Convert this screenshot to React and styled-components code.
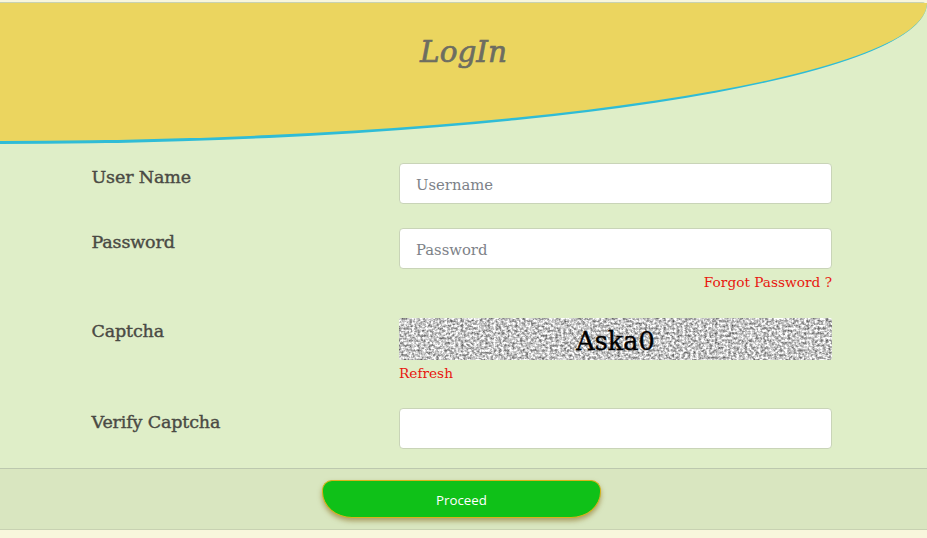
import React from "react";
import styled, { createGlobalStyle } from "styled-components";

const GlobalStyle = createGlobalStyle`
html, body {
    margin : 0;
    padding : 0;
    background-color : #f8f6dc;
}
* {
    box-sizing : border-box;
}
`

export default function App(){
    return(
        <>
        <GlobalStyle/>
        <Page>
            <Card>
                <Header>
                    <Title>LogIn</Title>
                </Header>
                <Form>
                    <Row>
                        <Label>User Name</Label>
                        <Field>
                            <Input type="text" placeholder="Username"/>
                        </Field>
                    </Row>
                    <Row $gap={24}>
                        <Label>Password</Label>
                        <Field>
                            <Input type="password" placeholder="Password"/>
                            <LinkRow $right>Forgot Password ?</LinkRow>
                        </Field>
                    </Row>
                    <Row $gap={25}>
                        <Label>Captcha</Label>
                        <Field>
                            <CaptchaBox>
                                <Noise aria-hidden="true">
                                    <filter id="grain" x="0" y="0" width="100%" height="100%" colorInterpolationFilters="sRGB">
                                        <feTurbulence type="fractalNoise" baseFrequency="0.37 0.41" numOctaves="4" seed="23"/>
                                        <feColorMatrix type="matrix" values="1.15 0 0 0 0.2  1.15 0 0 0 0.2  1.15 0 0 0 0.2  0 0 0 0 1"/>
                                        <feGaussianBlur stdDeviation="0.4"/>
                                    </filter>
                                    <rect width="100%" height="100%" filter="url(#grain)"/>
                                </Noise>
                                <CaptchaText>Aska0</CaptchaText>
                            </CaptchaBox>
                            <LinkRow>Refresh</LinkRow>
                        </Field>
                    </Row>
                    <Row $gap={25}>
                        <Label>Verify Captcha</Label>
                        <Field>
                            <Input type="text"/>
                        </Field>
                    </Row>
                </Form>
                <Footer>
                    <Proceed type="button">Proceed</Proceed>
                </Footer>
            </Card>
        </Page>
        </>
    )
}

const Page = styled.div`
width : 927px;
height : 538px;
padding-top : 2px;
overflow : hidden;
background-color : #f8f6dc;
`
const Card = styled.div`
width : 927px;
height : 528px;
display : flex;
flex-direction : column;
background-color : #dfeec8;
border-top : 1px solid #c8d2b2;
border-bottom : 1px solid #c8d2b2;
border-top-right-radius : 5px;
`
const Header = styled.div`
height : 141px;
flex-shrink : 0;
display : flex;
justify-content : center;
background-color : #ebd55f;
border-bottom : 3px solid #2fbcd6;
border-bottom-right-radius : 100% 100%;
`
const Title = styled.h1`
margin : 29px 0 0 0;
font-family : "DejaVu Serif", serif;
font-style : italic;
font-weight : 400;
font-size : 29.5px;
line-height : 40px;
color : #6d6d61;
-webkit-text-stroke : 0.7px #6d6d61;
`
const Form = styled.div`
flex : 1;
display : flex;
flex-direction : column;
padding : 19px 95px 0 91.5px;
`
const Row = styled.div`
display : flex;
margin-top : ${props => props.$gap || 0}px;
`
const Label = styled.div`
width : 307.5px;
flex-shrink : 0;
padding-top : 1.5px;
font-family : "DejaVu Serif", serif;
font-size : 17.5px;
font-weight : 400;
line-height : 24px;
letter-spacing : -0.15px;
color : #4a4a44;
-webkit-text-stroke : 0.4px #4a4a44;
`
const Field = styled.div`
flex : 1;
display : flex;
flex-direction : column;
`
const Input = styled.input`
width : 100%;
height : 41px;
padding : 2px 16px 0 16px;
background-color : #ffffff;
border : 1px solid #c9d4b8;
border-radius : 4px;
font-family : "DejaVu Serif", serif;
font-size : 14.8px;
outline : none;
&::placeholder {
    color : #7d8288;
    opacity : 1;
}
`
const LinkRow = styled.div`
margin-top : 3px;
text-align : ${props => props.$right ? "right" : "left"};
font-family : "DejaVu Serif", serif;
font-size : 13.7px;
line-height : 20px;
color : #e8170f;
`
const CaptchaBox = styled.div`
position : relative;
height : 42px;
margin-top : 1px;
padding-top : 5px;
display : flex;
align-items : center;
justify-content : center;
border-radius : 2px;
overflow : hidden;
`
const Noise = styled.svg`
position : absolute;
inset : 0;
width : 100%;
height : 100%;
`
const CaptchaText = styled.span`
position : relative;
font-family : "DejaVu Serif", serif;
font-size : 25.5px;
line-height : 37px;
color : #000000;
-webkit-text-stroke : 0.4px #000000;
`
const Footer = styled.div`
height : 61px;
flex-shrink : 0;
display : flex;
align-items : flex-start;
justify-content : center;
padding-top : 11px;
background-color : #d9e6c0;
border-top : 1px solid #bcc8ae;
`
const Proceed = styled.button`
width : 279px;
height : 38px;
padding : 2px 0 0 0;
margin-right : 4px;
background-color : #0fc118;
border : 1px solid #d9b21c;
border-radius : 10px 10px 30px 30px / 10px 10px 26px 26px;
box-shadow : 0 3px 5px rgba(130, 100, 20, 0.55);
color : #ffffff;
font-family : "Open Sans", sans-serif;
font-size : 13.3px;
`
